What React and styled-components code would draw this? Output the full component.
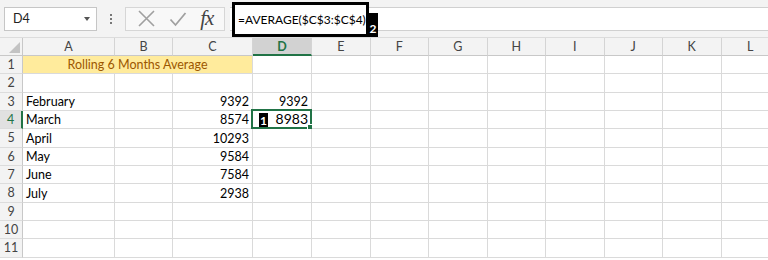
import React from "react";
import styled, { createGlobalStyle } from "styled-components";

const GlobalStyle = createGlobalStyle`
  html, body {
    margin: 0;
    padding: 0;
    background: #ffffff;
  }
  body {
    font-family: Lato, "Open Sans", "Liberation Sans", sans-serif;
  }
`;

const Page = styled.div`
  width: 768px;
  height: 260px;
  overflow: hidden;
  background: #ffffff;
`;

const Toolbar = styled.div`
  position: relative;
  height: 37px;
  display: flex;
  align-items: center;
  padding-left: 4px;
  background: #f3f3f3;
  border-bottom: 1px solid #dcdcdc;
`;

const NameBox = styled.div`
  width: 93px;
  height: 24px;
  box-sizing: border-box;
  display: flex;
  align-items: center;
  justify-content: space-between;
  padding: 0 6px 0 8px;
  background: #ffffff;
  border: 1px solid #c6c6c6;
  font-size: 12.5px;
  color: #222;
`;

const Caret = styled.span`
  width: 0;
  height: 0;
  border-left: 3.5px solid transparent;
  border-right: 3.5px solid transparent;
  border-top: 4px solid #555;
`;

const Dots = styled.div`
  width: 28px;
  display: flex;
  flex-direction: column;
  align-items: center;
  gap: 2px;
  span {
    width: 2px;
    height: 2px;
    background: #777;
  }
`;

const FxGroup = styled.div`
  width: 100px;
  height: 24px;
  box-sizing: border-box;
  display: flex;
  align-items: center;
  justify-content: space-around;
  padding: 0 4px;
  background: #f8f8f8;
  border: 1px solid #d6d6d6;
`;

const FxText = styled.span`
  font-family: "Liberation Serif", "DejaVu Serif", serif;
  font-style: italic;
  font-size: 21px;
  line-height: 1;
  color: #444;
  letter-spacing: -1px;
`;

const FormulaInput = styled.div`
  flex: 1;
  height: 22px;
  margin-left: 5px;
  background: #ffffff;
  border-top: 1px solid #d0d0d0;
  border-bottom: 1px solid #d0d0d0;
`;

const FormulaCallout = styled.div`
  position: absolute;
  left: 232px;
  top: 2px;
  width: 137px;
  height: 35px;
  box-sizing: border-box;
  display: flex;
  align-items: center;
  padding-left: 3px;
  background: #ffffff;
  border: 3px solid #000000;
  font-size: 12px;
  color: #000;
  white-space: nowrap;
`;

const CalloutNumber = styled.div`
  position: absolute;
  left: 368px;
  top: 13px;
  width: 10px;
  height: 24px;
  display: flex;
  align-items: flex-end;
  justify-content: center;
  padding-bottom: 1px;
  box-sizing: border-box;
  background: #000;
  color: #fff;
  font-size: 12px;
  font-weight: 700;
`;

const Sheet = styled.div`
  display: grid;
  grid-template-columns: 23px 92px 58px 80px 59px repeat(8, 58.5px);
  grid-template-rows: 18px repeat(11, 18.34px);
`;

const Corner = styled.div`
  position: relative;
  background: #f3f3f3;
  border-right: 1px solid #c8c8c8;
  border-bottom: 1px solid #c8c8c8;
  &::after {
    content: "";
    position: absolute;
    right: 2px;
    bottom: 2px;
    width: 0;
    height: 0;
    border-left: 11px solid transparent;
    border-bottom: 11px solid #c3c3c3;
  }
`;

const ColHead = styled.div`
  display: flex;
  align-items: center;
  justify-content: center;
  box-sizing: border-box;
  background: ${(p) => (p.$active ? "#d2d2d2" : "#f3f3f3")};
  border-right: 1px solid #d4d4d4;
  border-bottom: ${(p) => (p.$active ? "2px solid #217346" : "1px solid #c8c8c8")};
  color: ${(p) => (p.$active ? "#217346" : "#444")};
  font-size: 12.5px;
  font-weight: ${(p) => (p.$active ? 700 : 400)};
`;

const RowHead = styled.div`
  display: flex;
  align-items: center;
  justify-content: center;
  box-sizing: border-box;
  background: ${(p) => (p.$active ? "#e1e1e1" : "#f3f3f3")};
  border-right: ${(p) => (p.$active ? "2px solid #217346" : "1px solid #c8c8c8")};
  border-bottom: 1px solid #dcdcdc;
  color: ${(p) => (p.$active ? "#217346" : "#444")};
  font-size: 12.5px;
`;

const Cell = styled.div`
  position: relative;
  display: flex;
  align-items: flex-end;
  justify-content: ${(p) =>
    p.$align === "right" ? "flex-end" : p.$align === "center" ? "center" : "flex-start"};
  grid-column: ${(p) => (p.$span ? `span ${p.$span}` : "auto")};
  box-sizing: border-box;
  padding: 0 3px 1px 3px;
  background: ${(p) => p.$fill || "#ffffff"};
  color: ${(p) => p.$color || "#000"};
  border-right: 1px solid #dadada;
  border-bottom: 1px solid #dadada;
  font-size: ${(p) => (p.$big ? "14px" : "12.5px")};
  white-space: nowrap;
`;

const Selection = styled.div`
  position: absolute;
  top: -2px;
  left: -2px;
  right: -1px;
  bottom: -1px;
  border: 2px solid #217346;
  pointer-events: none;
`;

const Handle = styled.div`
  position: absolute;
  right: -4px;
  bottom: -4px;
  width: 5px;
  height: 5px;
  background: #217346;
  border: 1px solid #fff;
`;

const Badge = styled.div`
  position: absolute;
  left: 6px;
  top: 2px;
  width: 9px;
  height: 15px;
  display: flex;
  align-items: center;
  justify-content: center;
  background: #000;
  color: #fff;
  font-size: 12px;
  font-weight: 700;
`;

const cols = ["A", "B", "C", "D", "E", "F", "G", "H", "I", "J", "K", "L"];

const data = {
  3: ["February", "", "9392", "9392"],
  4: ["March", "", "8574", "SEL"],
  5: ["April", "", "10293"],
  6: ["May", "", "9584"],
  7: ["June", "", "7584"],
  8: ["July", "", "2938"],
};

const CrossIcon = () => (
  <svg width="19" height="19" viewBox="0 0 19 19">
    <path d="M2 2 L17 17 M17 2 L2 17" stroke="#a0a0a0" strokeWidth="1.6" fill="none" />
  </svg>
);

const CheckIcon = () => (
  <svg width="18" height="18" viewBox="0 0 18 18">
    <path d="M1.5 9.5 L6.5 15 L16.5 3" stroke="#a0a0a0" strokeWidth="1.8" fill="none" />
  </svg>
);

const renderRow = (r) => {
  if (r === 1) {
    return (
      <React.Fragment key={r}>
        <RowHead>{r}</RowHead>
        <Cell $span={3} $align="center" $fill="#ffeb9c" $color="#9c5700">
          Rolling 6 Months Average
        </Cell>
        {cols.slice(3).map((c) => (
          <Cell key={c} />
        ))}
      </React.Fragment>
    );
  }
  const values = data[r] || [];
  return (
    <React.Fragment key={r}>
      <RowHead $active={r === 4}>{r}</RowHead>
      {cols.map((c, i) => {
        const v = values[i] || "";
        if (v === "SEL") {
          return (
            <Cell key={c} $align="right" $big>
              <Badge>1</Badge>
              8983
              <Selection>
                <Handle />
              </Selection>
            </Cell>
          );
        }
        return (
          <Cell key={c} $align={i === 0 ? "left" : "right"}>
            {v}
          </Cell>
        );
      })}
    </React.Fragment>
  );
};

export default function App() {
  const rows = Array.from({ length: 11 }, (_, i) => i + 1);
  return (
    <Page>
      <GlobalStyle />
      <Toolbar>
        <NameBox>
          D4
          <Caret />
        </NameBox>
        <Dots>
          <span />
          <span />
          <span />
        </Dots>
        <FxGroup>
          <CrossIcon />
          <CheckIcon />
          <FxText>fx</FxText>
        </FxGroup>
        <FormulaInput />
        <FormulaCallout>=AVERAGE($C$3:$C$4)</FormulaCallout>
        <CalloutNumber>2</CalloutNumber>
      </Toolbar>
      <Sheet>
        <Corner />
        {cols.map((c) => (
          <ColHead key={c} $active={c === "D"}>
            {c}
          </ColHead>
        ))}
        {rows.map(renderRow)}
      </Sheet>
    </Page>
  );
}
